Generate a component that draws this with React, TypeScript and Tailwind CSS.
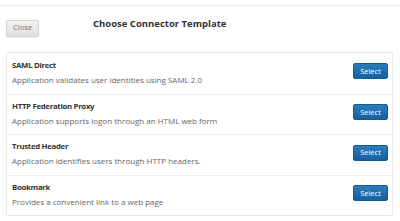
const templates = [
  { name: 'SAML Direct', desc: 'Application validates user identities using SAML 2.0' },
  { name: 'HTTP Federation Proxy', desc: 'Application supports logon through an HTML web form' },
  { name: 'Trusted Header', desc: 'Application identifies users through HTTP headers.' },
  { name: 'Bookmark', desc: 'Provides a convenient link to a web page' },
];

const App = () => {
  return (
    <div
      className="w-[400px] h-[221px] bg-white overflow-hidden"
      style={{ fontFamily: '"Open Sans", "Liberation Sans", sans-serif' }}
    >
      <div className="h-[6px] border-b border-[#ececec]" />
      <div className="flex items-center h-[28px] mt-[8px] px-[6px]">
        <button className="w-[33px] h-[17px] rounded-[2px] border border-[#d4d4d4] bg-gradient-to-b from-[#f2f2f2] to-[#dedede] text-[7.5px] text-[#777] shadow-[0_1px_1px_rgba(0,0,0,0.08)]">
          Close
        </button>
        <h1 className="ml-[54px] text-[9.5px] font-bold text-[#333] -mt-[8px]">
          Choose Connector Template
        </h1>
      </div>
      <div className="mx-[6px] mt-[10px] w-[387px] border border-[#e9e9e9] rounded-[2px]">
        {templates.map((t, i) => (
          <div
            key={t.name}
            className={`flex items-center h-[40.5px] pl-[5px] pr-[4px] ${i > 0 ? 'border-t border-[#ececec]' : ''}`}
          >
            <div className="flex-1 -mt-[2px]">
              <div className="text-[7.8px] font-bold text-[#333] leading-[12px] tracking-[-0.3px]">{t.name}</div>
              <div className="text-[8px] text-[#666] leading-[12px] mt-[3px]">{t.desc}</div>
            </div>
            <button className="w-[35px] h-[16px] -mt-[4px] rounded-[2px] border border-[#145a8c] bg-gradient-to-b from-[#2a7cbd] to-[#15609f] text-[7.5px] text-white">
              Select
            </button>
          </div>
        ))}
      </div>
    </div>
  );
};

export default App;
